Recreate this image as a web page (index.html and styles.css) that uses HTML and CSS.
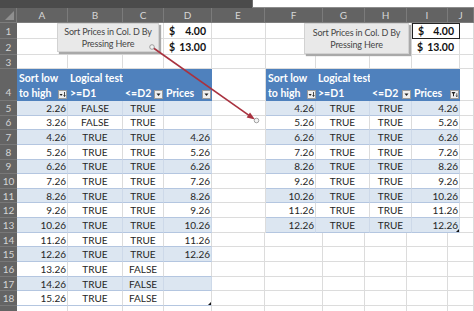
FILE: index.html
```html
<!DOCTYPE html>
<html>
<head>
<meta charset="utf-8">
<link rel="stylesheet" href="styles.css">
</head>
<body>
<div class="sheet">
  <div class="topbar"><div class="tb-dark"></div><div class="tb-light"></div></div>
  <div class="colhdr">
    <div class="ch w-rh corner"><span class="tri"></span></div>
    <div class="ch w-a">A</div><div class="ch w-b">B</div><div class="ch w-c">C</div><div class="ch w-d">D</div>
    <div class="ch w-e2">E</div><div class="ch w-f2">F</div><div class="ch w-g2">G</div><div class="ch w-h2">H</div><div class="ch w-i2">I</div><div class="ch w-j">J</div>
  </div>

  <div class="row h16">
    <div class="rh">1</div>
    <div class="cell w-a"></div><div class="cell w-b"></div><div class="cell w-c"></div>
    <div class="cell w-d acct"><span>$</span><span>4.00</span></div>
    <div class="cell w-e1"></div><div class="cell w-f1"></div><div class="cell w-g1"></div><div class="cell w-h1"></div>
    <div class="cell w-i1 acct box"><span>$</span><span>4.00</span></div>
    <div class="cell w-j"></div>
  </div>
  <div class="row h16">
    <div class="rh">2</div>
    <div class="cell w-a"></div><div class="cell w-b"></div><div class="cell w-c"></div>
    <div class="cell w-d acct"><span>$</span><span>13.00</span></div>
    <div class="cell w-e1"></div><div class="cell w-f1"></div><div class="cell w-g1"></div><div class="cell w-h1"></div>
    <div class="cell w-i1 acct"><span>$</span><span>13.00</span></div>
    <div class="cell w-j"></div>
  </div>
  <div class="row h14">
    <div class="rh">3</div>
    <div class="cell w-a"></div><div class="cell w-b"></div><div class="cell w-c"></div><div class="cell w-d"></div>
    <div class="cell w-e1"></div><div class="cell w-f1"></div><div class="cell w-g1"></div><div class="cell w-h1"></div><div class="cell w-i1"></div><div class="cell w-j"></div>
  </div>
  <div class="row h32">
    <div class="rh rh-bottom">4</div>
    <div class="cell w-a th"><span class="lbl">Sort low<br>to high</span><span class="dd"><svg viewBox="0 0 7 7"><path d="M0.5 3h3.2l-1.6 2z" fill="#222"/><path d="M5.5 1v4.5M4.6 4.2l0.9 1.2l0.9-1.2" stroke="#222" stroke-width="0.8" fill="none"/></svg></span></div>
    <div class="cell w-b th"><span class="lbl">Logical test<br>&gt;=D1</span><span class="dd"><svg viewBox="0 0 7 7"><path d="M1.5 2.5h4l-2 2.5z" fill="#222"/></svg></span></div>
    <div class="cell w-c th"><span class="lbl">&lt;=D2</span><span class="dd"><svg viewBox="0 0 7 7"><path d="M1.5 2.5h4l-2 2.5z" fill="#222"/></svg></span></div>
    <div class="cell w-d th"><span class="lbl">Prices</span><span class="dd"><svg viewBox="0 0 7 7"><path d="M1.5 2.5h4l-2 2.5z" fill="#222"/></svg></span></div>
    <div class="cell w-e1"></div>
    <div class="cell w-f1 th"><span class="lbl">Sort low<br>to high</span><span class="dd"><svg viewBox="0 0 7 7"><path d="M0.5 3h3.2l-1.6 2z" fill="#222"/><path d="M5.5 1v4.5M4.6 4.2l0.9 1.2l0.9-1.2" stroke="#222" stroke-width="0.8" fill="none"/></svg></span></div>
    <div class="cell w-g1 th"><span class="lbl">Logical test<br>&gt;=D1</span><span class="dd"><svg viewBox="0 0 7 7"><path d="M1.5 2.5h4l-2 2.5z" fill="#222"/></svg></span></div>
    <div class="cell w-h1 th"><span class="lbl">&lt;=D2</span><span class="dd"><svg viewBox="0 0 7 7"><path d="M1.5 2.5h4l-2 2.5z" fill="#222"/></svg></span></div>
    <div class="cell w-i1 th"><span class="lbl">Prices</span><span class="dd"><svg viewBox="0 0 7 7"><path d="M0.5 1h4l-1.5 2v2.5l-1-0.6v-1.9z" fill="#222"/><path d="M5.8 2.2v3.5M5 4.6l0.8 1.1l0.8-1.1" stroke="#222" stroke-width="0.7" fill="none"/></svg></span></div>
    <div class="cell w-j"></div>
  </div>

  <div class="row">
    <div class="rh">5</div>
    <div class="cell w-a tb num">2.26</div><div class="cell w-b tb ctr">FALSE</div><div class="cell w-c tb ctr">TRUE</div><div class="cell w-d tb num"></div>
    <div class="cell w-e1"></div>
    <div class="cell w-f1 tb num">4.26</div><div class="cell w-g1 tb ctr">TRUE</div><div class="cell w-h1 tb ctr">TRUE</div><div class="cell w-i1 tb num">4.26</div>
    <div class="cell w-j"></div>
  </div>
  <div class="row">
    <div class="rh">6</div>
    <div class="cell w-a tw num">3.26</div><div class="cell w-b tw ctr">FALSE</div><div class="cell w-c tw ctr">TRUE</div><div class="cell w-d tw num"></div>
    <div class="cell w-e1"></div>
    <div class="cell w-f1 tw num">5.26</div><div class="cell w-g1 tw ctr">TRUE</div><div class="cell w-h1 tw ctr">TRUE</div><div class="cell w-i1 tw num">5.26</div>
    <div class="cell w-j"></div>
  </div>
  <div class="row">
    <div class="rh">7</div>
    <div class="cell w-a tb num">4.26</div><div class="cell w-b tb ctr">TRUE</div><div class="cell w-c tb ctr">TRUE</div><div class="cell w-d tb num">4.26</div>
    <div class="cell w-e1"></div>
    <div class="cell w-f1 tb num">6.26</div><div class="cell w-g1 tb ctr">TRUE</div><div class="cell w-h1 tb ctr">TRUE</div><div class="cell w-i1 tb num">6.26</div>
    <div class="cell w-j"></div>
  </div>
  <div class="row">
    <div class="rh">8</div>
    <div class="cell w-a tw num">5.26</div><div class="cell w-b tw ctr">TRUE</div><div class="cell w-c tw ctr">TRUE</div><div class="cell w-d tw num">5.26</div>
    <div class="cell w-e1"></div>
    <div class="cell w-f1 tw num">7.26</div><div class="cell w-g1 tw ctr">TRUE</div><div class="cell w-h1 tw ctr">TRUE</div><div class="cell w-i1 tw num">7.26</div>
    <div class="cell w-j"></div>
  </div>
  <div class="row">
    <div class="rh">9</div>
    <div class="cell w-a tb num">6.26</div><div class="cell w-b tb ctr">TRUE</div><div class="cell w-c tb ctr">TRUE</div><div class="cell w-d tb num">6.26</div>
    <div class="cell w-e1"></div>
    <div class="cell w-f1 tb num">8.26</div><div class="cell w-g1 tb ctr">TRUE</div><div class="cell w-h1 tb ctr">TRUE</div><div class="cell w-i1 tb num">8.26</div>
    <div class="cell w-j"></div>
  </div>
  <div class="row">
    <div class="rh">10</div>
    <div class="cell w-a tw num">7.26</div><div class="cell w-b tw ctr">TRUE</div><div class="cell w-c tw ctr">TRUE</div><div class="cell w-d tw num">7.26</div>
    <div class="cell w-e1"></div>
    <div class="cell w-f1 tw num">9.26</div><div class="cell w-g1 tw ctr">TRUE</div><div class="cell w-h1 tw ctr">TRUE</div><div class="cell w-i1 tw num">9.26</div>
    <div class="cell w-j"></div>
  </div>
  <div class="row">
    <div class="rh">11</div>
    <div class="cell w-a tb num">8.26</div><div class="cell w-b tb ctr">TRUE</div><div class="cell w-c tb ctr">TRUE</div><div class="cell w-d tb num">8.26</div>
    <div class="cell w-e1"></div>
    <div class="cell w-f1 tb num">10.26</div><div class="cell w-g1 tb ctr">TRUE</div><div class="cell w-h1 tb ctr">TRUE</div><div class="cell w-i1 tb num">10.26</div>
    <div class="cell w-j"></div>
  </div>
  <div class="row">
    <div class="rh">12</div>
    <div class="cell w-a tw num">9.26</div><div class="cell w-b tw ctr">TRUE</div><div class="cell w-c tw ctr">TRUE</div><div class="cell w-d tw num">9.26</div>
    <div class="cell w-e1"></div>
    <div class="cell w-f1 tw num">11.26</div><div class="cell w-g1 tw ctr">TRUE</div><div class="cell w-h1 tw ctr">TRUE</div><div class="cell w-i1 tw num">11.26</div>
    <div class="cell w-j"></div>
  </div>
  <div class="row">
    <div class="rh">13</div>
    <div class="cell w-a tb num">10.26</div><div class="cell w-b tb ctr">TRUE</div><div class="cell w-c tb ctr">TRUE</div><div class="cell w-d tb num">10.26</div>
    <div class="cell w-e1"></div>
    <div class="cell w-f1 tb num">12.26</div><div class="cell w-g1 tb ctr">TRUE</div><div class="cell w-h1 tb ctr">TRUE</div><div class="cell w-i1 tb num last">12.26<span class="rsz"></span></div>
    <div class="cell w-j"></div>
  </div>
  <div class="row">
    <div class="rh">14</div>
    <div class="cell w-a tw num">11.26</div><div class="cell w-b tw ctr">TRUE</div><div class="cell w-c tw ctr">TRUE</div><div class="cell w-d tw num">11.26</div>
    <div class="cell w-e2"></div><div class="cell w-f2"></div><div class="cell w-g2"></div><div class="cell w-h2"></div><div class="cell w-i2"></div><div class="cell w-j"></div>
  </div>
  <div class="row">
    <div class="rh">15</div>
    <div class="cell w-a tb num">12.26</div><div class="cell w-b tb ctr">TRUE</div><div class="cell w-c tb ctr">TRUE</div><div class="cell w-d tb num">12.26</div>
    <div class="cell w-e2"></div><div class="cell w-f2"></div><div class="cell w-g2"></div><div class="cell w-h2"></div><div class="cell w-i2"></div><div class="cell w-j"></div>
  </div>
  <div class="row">
    <div class="rh">16</div>
    <div class="cell w-a tw num">13.26</div><div class="cell w-b tw ctr">TRUE</div><div class="cell w-c tw ctr">FALSE</div><div class="cell w-d tw num"></div>
    <div class="cell w-e2"></div><div class="cell w-f2"></div><div class="cell w-g2"></div><div class="cell w-h2"></div><div class="cell w-i2"></div><div class="cell w-j"></div>
  </div>
  <div class="row">
    <div class="rh">17</div>
    <div class="cell w-a tb num">14.26</div><div class="cell w-b tb ctr">TRUE</div><div class="cell w-c tb ctr">FALSE</div><div class="cell w-d tb num"></div>
    <div class="cell w-e2"></div><div class="cell w-f2"></div><div class="cell w-g2"></div><div class="cell w-h2"></div><div class="cell w-i2"></div><div class="cell w-j"></div>
  </div>
  <div class="row">
    <div class="rh">18</div>
    <div class="cell w-a tw num">15.26</div><div class="cell w-b tw ctr">TRUE</div><div class="cell w-c tw ctr">FALSE</div><div class="cell w-d tw num last"><span class="rsz"></span></div>
    <div class="cell w-e2"></div><div class="cell w-f2"></div><div class="cell w-g2"></div><div class="cell w-h2"></div><div class="cell w-i2"></div><div class="cell w-j"></div>
  </div>
  <div class="row">
    <div class="rh"></div>
    <div class="cell w-a"></div><div class="cell w-b"></div><div class="cell w-c"></div><div class="cell w-d"></div>
    <div class="cell w-e2"></div><div class="cell w-f2"></div><div class="cell w-g2"></div><div class="cell w-h2"></div><div class="cell w-i2"></div><div class="cell w-j"></div>
  </div>

  <div class="btn btn-l">Sort Prices in Col. D By<br>Pressing Here</div>
  <div class="btn btn-r">Sort Prices in Col. D By<br>Pressing Here</div>

  <svg class="arrow" width="474" height="311" viewBox="0 0 474 311">
    <line x1="152" y1="47" x2="249" y2="115.3" stroke="#a9323f" stroke-width="1.6"/>
    <polygon points="255,119.5 246.6,117.5 250,112.6" fill="#a9323f"/>
    <circle cx="152" cy="47" r="2.3" fill="#f4f4f4" stroke="#8a8a8a" stroke-width="0.8"/>
    <circle cx="256.5" cy="120.5" r="2.3" fill="#f4f4f4" stroke="#8a8a8a" stroke-width="0.8"/>
  </svg>
</div>
</body>
</html>
```
FILE: styles.css
```css
* { box-sizing: border-box; }
html, body { margin: 0; padding: 0; background: #fff; }

.sheet {
  position: relative;
  width: 474px;
  height: 311px;
  overflow: hidden;
  font-family: Lato, "Open Sans", sans-serif;
  color: #262626;
}

.topbar { display: flex; height: 8px; }
.tb-dark { width: 252px; background: #4b4b4b; }
.tb-light { flex: 1; background: #fff; border-left: 1px solid #6e6e6e; border-bottom: 1px solid #8c8c8c; }

.colhdr { display: flex; height: 15px; background: #636363; border-bottom: 1px solid #7d7d7d; }
.ch {
  flex: none;
  height: 100%;
  border-right: 1px solid #7b7b7b;
  color: #d6d6d6;
  font-size: 10px;
  line-height: 14px;
  text-align: center;
}
.corner { display: flex; align-items: flex-end; justify-content: flex-end; padding: 0 2px 2px 0; }
.corner .tri { width: 0; height: 0; border-left: 9px solid transparent; border-bottom: 9px solid #8f8f8f; }

.row { display: flex; height: 14.65px; }
.row.h16 { height: 16px; }
.row.h14 { height: 14px; }
.row.h32 { height: 32px; }

.rh {
  flex: none;
  width: 17px;
  height: 100%;
  background: #646464;
  color: #d4d4d4;
  font-size: 10px;
  display: flex;
  align-items: center;
  justify-content: center;
  border-bottom: 1px solid #787878;
}
.rh-bottom { align-items: flex-end; padding-bottom: 2px; }

.cell {
  flex: none;
  height: 100%;
  display: flex;
  align-items: center;
  padding: 0 2px;
  border-right: 1px solid #dcdcdc;
  border-bottom: 1px solid #dcdcdc;
  font-size: 10px;
  white-space: nowrap;
}

.w-rh { width: 17px; }
.w-a { width: 51px; }
.w-b { width: 55px; }
.w-c { width: 41px; }
.w-d { width: 48px; }
.w-e1 { width: 54px; }
.w-f1 { width: 50px; }
.w-g1 { width: 54px; }
.w-h1 { width: 42px; }
.w-i1 { width: 48px; }
.w-e2 { width: 53px; }
.w-f2 { width: 58px; }
.w-g2 { width: 42px; }
.w-h2 { width: 42px; }
.w-i2 { width: 41px; }
.w-j { flex: 1; }

.tb { background: #dce6f1; border-right-color: #cdd9e9; border-bottom-color: #b4c6e0; }
.tw { background: #fff; border-right-color: #dcdcdc; border-bottom-color: #b4c6e0; }
.num { justify-content: flex-end; padding-right: 1px; }
.ctr { justify-content: center; }
.last { position: relative; }
.rsz {
  position: absolute;
  right: 0;
  bottom: 0;
  width: 0;
  height: 0;
  border-left: 3px solid transparent;
  border-bottom: 3px solid #111;
}

.th {
  background: #4f81bd;
  color: #fff;
  font-weight: 700;
  font-size: 10.5px;
  align-items: flex-end;
  border-right: none;
  border-bottom: none;
  padding: 0 1px 1px 2px;
}
.th .lbl { flex: 1; line-height: 14.5px; }
.dd {
  flex: none;
  width: 9px;
  height: 9px;
  margin-bottom: 1px;
  background: #efefef;
  border: 1px solid #9b9b9b;
  display: flex;
  align-items: center;
  justify-content: center;
}
.dd svg { width: 7px; height: 7px; display: block; }

.acct {
  justify-content: space-between;
  font-weight: 700;
  font-size: 10.5px;
  color: #111;
  padding: 0 5px 0 5px;
}
.box { border: 1px solid #222; }

.btn {
  position: absolute;
  display: flex;
  align-items: center;
  justify-content: center;
  text-align: center;
  background: #e9e9e9;
  border: 1px solid #d2d2d2;
  box-shadow: 2px 2px 1px #a9a9a9;
  font-size: 9px;
  letter-spacing: -0.15px;
  line-height: 11.5px;
  color: #464646;
}
.btn-l { left: 57px; top: 23px; width: 102px; height: 29px; }
.btn-r { left: 304px; top: 23px; width: 105px; height: 31px; }

.arrow { position: absolute; left: 0; top: 0; pointer-events: none; }
```
